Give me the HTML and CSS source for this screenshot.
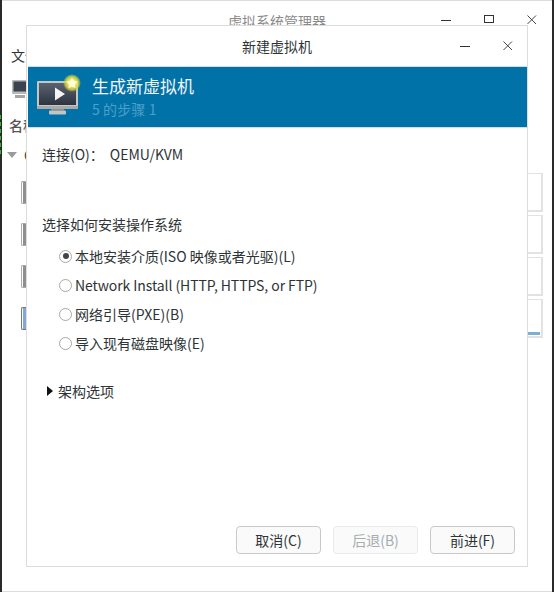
FILE: index.html
```html
<!DOCTYPE html>
<html lang="zh-CN">
<head>
<meta charset="utf-8">
<title>新建虚拟机</title>
<link rel="stylesheet" href="styles.css">
</head>
<body>
<div class="desktop">
  <span class="green-edge"></span>
  <section class="parent">
    <header class="parent-title">
      <span class="parent-name">虚拟系统管理器</span>
      <div class="win-btns parent-btns">
        <svg width="12" height="12" viewBox="0 0 12 12"><path d="M1 6.500h10" class="glyph"/></svg>
        <svg width="12" height="12" viewBox="0 0 12 12"><rect x="1.500" y="1.500" width="9" height="7" class="glyph"/></svg>
        <svg width="12" height="12" viewBox="0 0 12 12"><path d="M1.500 1.500l8.500 8.500M10 1.500l-8.500 8.500" class="glyph thin"/></svg>
      </div>
    </header>
    <div class="parent-menu">文件</div>
    <div class="parent-tool">
      <svg width="18" height="22" viewBox="0 0 18 22"><rect x="1" y="1" width="16" height="14" rx="1" fill="#b9b9b7"/><rect x="2.500" y="2.500" width="13" height="10" fill="#3b4351"/><rect x="4" y="16" width="10" height="3" fill="#a5a5a3"/></svg>
    </div>
    <div class="parent-head">名称</div>
    <div class="parent-group"><span class="group-arrow"></span><span>Q</span></div>
    <div class="vm-list">
      <div class="vm-row"><span class="vm-icon"></span><span class="gauge"></span></div>
      <div class="vm-row"><span class="vm-icon"></span><span class="gauge"></span></div>
      <div class="vm-row"><span class="vm-icon"></span><span class="gauge"></span></div>
      <div class="vm-row"><span class="vm-icon active"></span><span class="gauge"><i class="gauge-bar"></i></span></div>
    </div>
  </section>

  <section class="dialog">
    <header class="dialog-title">
      <span class="dialog-name">新建虚拟机</span>
      <div class="win-btns dialog-btns">
        <svg width="12" height="12" viewBox="0 0 12 12"><path d="M1 6.500h10" class="glyph"/></svg>
        <svg width="12" height="12" viewBox="0 0 12 12"><path d="M1.500 1.500l8.500 8.500M10 1.500l-8.500 8.500" class="glyph thin"/></svg>
      </div>
    </header>
    <div class="banner">
      <svg class="banner-icon" width="48" height="46" viewBox="0 0 48 46">
        <defs>
          <linearGradient id="scr" x1="0" y1="0" x2="0" y2="1"><stop offset="0" stop-color="#5a6270"/><stop offset="1" stop-color="#2d3440"/></linearGradient>
          <radialGradient id="glow"><stop offset="0.35" stop-color="#fff46a"/><stop offset="0.75" stop-color="#d8d63a" stop-opacity="0.8"/><stop offset="1" stop-color="#d8d63a" stop-opacity="0"/></radialGradient>
        </defs>
        <rect x="1" y="9" width="41" height="28" rx="1" fill="#c6c6c4"/>
        <rect x="3" y="11" width="37" height="22" fill="url(#scr)"/>
        <rect x="1" y="34" width="41" height="3" fill="#a9a9a7"/>
        <rect x="15" y="37" width="13" height="1.500" fill="#8d8d8b"/>
        <rect x="13" y="38.500" width="17" height="4" rx="1" fill="#c4c4c2"/>
        <path d="M19 15.500l10 6.500-10 6.500z" fill="#f4f4f4"/>
        <circle cx="36" cy="11" r="9" fill="url(#glow)"/>
        <path d="M36 5.500l1.700 3.700 4 .4-3 2.700.9 4-3.600-2.100-3.600 2.100.9-4-3-2.700 4-.4z" fill="#fffde8"/>
      </svg>
      <div class="banner-text">
        <div class="banner-title">生成新虚拟机</div>
        <div class="banner-step">5 的步骤 1</div>
      </div>
    </div>
    <div class="body">
      <div class="conn"><span>连接(O)：</span><span>QEMU/KVM</span></div>
      <div class="section-label">选择如何安装操作系统</div>
      <div class="radios">
        <div class="radio-row"><span class="radio on"></span><span>本地安装介质(ISO 映像或者光驱)(L)</span></div>
        <div class="radio-row"><span class="radio"></span><span class="tight">Network Install (HTTP, HTTPS, or FTP)</span></div>
        <div class="radio-row"><span class="radio"></span><span>网络引导(PXE)(B)</span></div>
        <div class="radio-row"><span class="radio"></span><span>导入现有磁盘映像(E)</span></div>
      </div>
      <div class="expander"><span class="exp-arrow"></span><span>架构选项</span></div>
    </div>
    <footer class="actions">
      <button class="btn">取消(C)</button>
      <button class="btn off">后退(B)</button>
      <button class="btn">前进(F)</button>
    </footer>
  </section>
</div>
</body>
</html>
```

FILE: styles.css
```css
* { box-sizing: border-box; }
html, body { margin: 0; padding: 0; }
body {
  width: 554px;
  height: 592px;
  overflow: hidden;
  font-family: "Noto Sans CJK SC", "Noto Sans", sans-serif;
  font-size: 14px;
  color: #2e3436;
  background: #fff;
}
.desktop {
  position: relative;
  width: 554px;
  height: 592px;
  background: #2a2a2a;
  overflow: hidden;
}
.green-edge {
  position: absolute;
  left: 0;
  top: 115px;
  width: 1px;
  height: 40px;
  z-index: 3;
  background: repeating-linear-gradient(#1fc41f 0 4px, #2a2a2a 4px 7px);
}
.parent {
  position: absolute;
  left: 2px;
  top: 0;
  width: 550px;
  height: 592px;
  background: #fff;
  border-top: 1px solid #dcdcdc;
  border-bottom: 1px solid #dcdcdc;
}
.parent-title {
  height: 44px;
  position: relative;
  display: flex;
  justify-content: center;
  padding: 11px 0 0 0;
}
.parent-name {
  font-size: 14px;
  line-height: 18px;
  color: #8a8a8a;
}
.win-btns { position: absolute; display: flex; }
.parent-btns { left: 438px; top: 13px; gap: 31px; }
.dialog-btns { right: 13px; top: 14px; gap: 31px; }
.glyph { fill: none; stroke: #2e3436; stroke-width: 1; }
.thin { stroke-width: 0.9; }
.parent-menu { padding: 0 0 0 9px; line-height: 20px; height: 34px; }
.parent-tool { padding: 0 0 0 9px; height: 36px; }
.parent-head { padding: 0 0 0 7px; line-height: 20px; height: 30px; color: #555; font-weight: 500; }
.parent-group { display: flex; align-items: center; gap: 7px; padding-left: 5px; height: 20px; margin-bottom: 8px; color: #444; }
.group-arrow {
  width: 0; height: 0;
  border-left: 5px solid transparent;
  border-right: 5px solid transparent;
  border-top: 6px solid #9a9a9a;
}
.vm-list { display: flex; flex-direction: column; gap: 3px; padding: 0 9px 0 19px; }
.vm-row { display: flex; justify-content: space-between; align-items: center; height: 39px; }
.vm-icon {
  width: 6px;
  height: 23px;
  border: 1px solid #aaa;
  border-right: 0;
  border-radius: 2px 0 0 2px;
  background: linear-gradient(90deg, #fff 0 1px, #8f8f8f 1px 4px, #fff 4px);
}
.vm-icon.active { background: linear-gradient(90deg, #fff 0 1px, #7fa7d8 1px 4px, #fff 4px); border-color: #777; }
.gauge {
  position: relative;
  display: block;
  width: 16px;
  height: 39px;
  border: 1px solid #e2e2e2;
  border-left: 0;
  border-right-width: 2px;
  border-bottom-width: 2px;
}
.gauge-bar {
  position: absolute;
  left: 0; right: 1px; bottom: 1px;
  height: 3px;
  background: #7db0cf;
}
.dialog {
  position: absolute;
  left: 26px;
  top: 25px;
  width: 502px;
  height: 542px;
  background: #fff;
  border: 1px solid #dcdcdc;
  display: flex;
  flex-direction: column;
}
.dialog-title {
  position: relative;
  height: 40px;
  display: flex;
  justify-content: center;
  align-items: center;
  flex: none;
}
.dialog-name { color: #2e3436; line-height: 20px; }
.banner {
  flex: none;
  height: 62px;
  margin-left: 1px;
  background: #0072a8;
  border-top: 1px solid #d6dde2;
  border-bottom: 1px solid #d6dde2;
  display: flex;
  align-items: flex-start;
  padding: 5px 0 0 8px;
  gap: 8px;
}
.banner-icon { flex: none; }
.banner-title { color: #f2f6f8; font-size: 17px; line-height: 27px; }
.banner-step { color: #4d9fcb; font-size: 14px; line-height: 20px; letter-spacing: 0.1px; }
.body { flex: 1; padding: 16px 0 0 15px; }
.conn { display: flex; gap: 6px; line-height: 20px; }
.section-label { margin-top: 50px; line-height: 20px; }
.radios { display: flex; flex-direction: column; gap: 9px; margin-top: 12px; padding-left: 17px; }
.radio-row { display: flex; align-items: center; gap: 3px; height: 20px; }
.tight { letter-spacing: -0.08px; }
.radio {
  width: 13px;
  height: 13px;
  border: 1px solid #a8a8a8;
  border-radius: 50%;
  background: #fff;
  flex: none;
  display: flex;
  align-items: center;
  justify-content: center;
}
.radio.on::after {
  content: "";
  width: 6px;
  height: 6px;
  border-radius: 50%;
  background: #444;
}
.expander { display: flex; align-items: center; gap: 5px; margin-top: 28px; padding-left: 5px; line-height: 20px; }
.exp-arrow {
  width: 0; height: 0;
  border-top: 5px solid transparent;
  border-bottom: 5px solid transparent;
  border-left: 6px solid #111;
}
.actions {
  flex: none;
  display: flex;
  justify-content: flex-end;
  gap: 12px;
  padding: 0 12px 12px 0;
}
.btn {
  width: 85px;
  height: 28px;
  border: 1px solid #c9c9c9;
  border-radius: 4px;
  background: #fafafa;
  color: #2e3436;
  font: inherit;
  line-height: 20px;
  padding: 0;
}
.btn.off { border-color: #e8eaee; color: #a6acb0; }
```
